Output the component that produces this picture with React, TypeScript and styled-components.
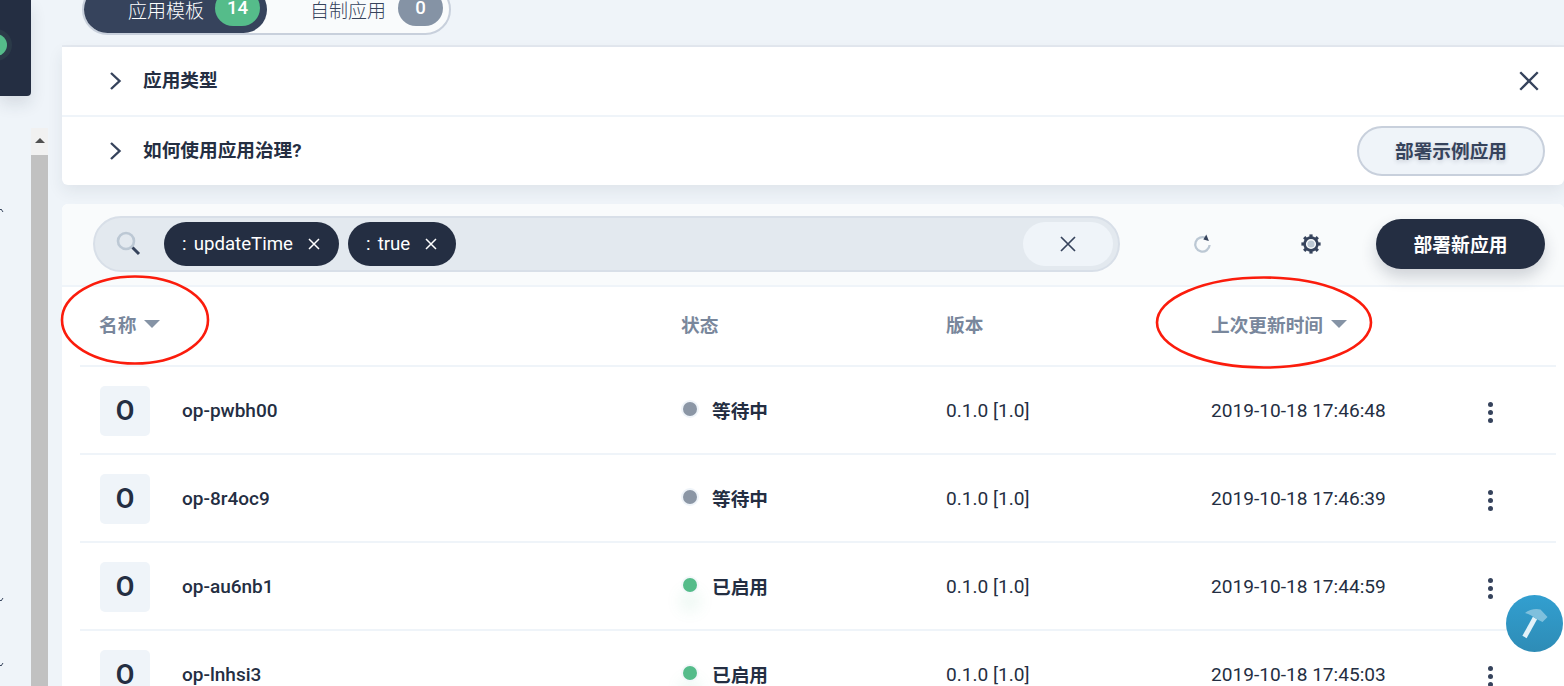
import React from "react";
import styled, { createGlobalStyle } from "styled-components";

const Global = createGlobalStyle`
  html, body { margin: 0; padding: 0; height: 100%; overflow: hidden; background: #eff4f9; }
  body { font-family: Roboto, "Noto Sans CJK SC", sans-serif; color: #242e42; }
  * { box-sizing: border-box; }
`;

const Page = styled.div`
  display: flex;
  width: 1564px;
  height: 686px;
  overflow: hidden;
  background: #eff4f9;
`;

const Side = styled.aside`
  flex: 0 0 62px;
  display: flex;
  flex-direction: column;
`;

const SideCard = styled.div`
  position: relative;
  flex: 0 0 96px;
  width: 31px;
  background: #242e42;
  border-radius: 0 0 4px 0;
  box-shadow: 0 8px 16px rgba(36, 46, 66, 0.12);
  overflow: hidden;
`;

const SideBadge = styled.span`
  position: absolute;
  left: -15px;
  top: 34px;
  width: 22px;
  height: 22px;
  border-radius: 50%;
  background: #55bc8a;
  box-shadow: 0 0 0 5px #2b3a48;
`;

const SideBody = styled.div`
  flex: 1;
  display: flex;
  padding-top: 32px;
`;

const SideStrip = styled.div`
  flex: 0 0 31px;
  display: flex;
  flex-direction: column;
  padding-top: 80px;
`;

const StripMark = styled.svg<{ $gap: number }>`
  display: block;
  width: 4px;
  height: 5px;
  margin-top: ${(p) => p.$gap}px;
`;

const Scrollbar = styled.div`
  flex: 0 0 17px;
  display: flex;
  flex-direction: column;
`;

const ScrollArrow = styled.div`
  flex: 0 0 27px;
  display: flex;
  align-items: center;
  justify-content: center;
  background: #f1f1f1;
  &::before {
    content: "";
    border-left: 5px solid transparent;
    border-right: 5px solid transparent;
    border-bottom: 5px solid #505050;
    margin-bottom: 3px;
  }
`;

const ScrollThumb = styled.div`
  flex: 1;
  background: #c1c1c1;
`;

const Main = styled.main`
  flex: 1;
  min-width: 0;
  display: flex;
  flex-direction: column;
`;

const TabBar = styled.div`
  flex: 0 0 47px;
  padding-left: 20px;
  border-bottom: 2px solid #e4e9f0;
`;

const TabGroup = styled.div`
  display: inline-flex;
  align-items: center;
  width: 369px;
  height: 51px;
  margin-top: -16px;
  border: 2px solid #c8d0dc;
  border-radius: 26px;
  background: #f9fbfc;
`;

const Tab = styled.div<{ $active?: boolean }>`
  display: flex;
  align-items: center;
  height: 47px;
  width: ${(p) => (p.$active ? "183px" : "auto")};
  padding: ${(p) => (p.$active ? "0 7px 0 44px" : "0 0 0 43px")};
  border-radius: 24px;
  background: ${(p) => (p.$active ? "#36435c" : "transparent")};
  color: ${(p) => (p.$active ? "#ffffff" : "#36435c")};
  font-size: 19px;
  font-weight: 300;
`;

const TabLabel = styled.span`
  padding-bottom: 1px;
`;

const TabCount = styled.span<{ $tone: "green" | "grey" }>`
  display: flex;
  align-items: center;
  justify-content: center;
  width: 45px;
  height: 36px;
  margin: -3px 0 0 ${(p) => (p.$tone === "green" ? "11px" : "12px")};
  border-radius: 18px;
  background: ${(p) => (p.$tone === "green" ? "#55bc8a" : "#8593a5")};
  color: #ffffff;
  font-size: 18.67px;
  font-weight: 500;
`;

const InfoPanel = styled.section`
  flex: 0 0 138px;
  background: #ffffff;
  border-radius: 0 0 6px 6px;
  box-shadow: 0 6px 16px rgba(36, 46, 66, 0.08);
`;

const InfoRow = styled.div<{ $divider?: boolean }>`
  display: flex;
  align-items: center;
  height: ${(p) => (p.$divider ? "70px" : "68px")};
  padding: 0 ${(p) => (p.$divider ? "25px" : "19px")} 0 47px;
  border-bottom: ${(p) => (p.$divider ? "2px solid #eff4f9" : "none")};
`;

const InfoTitle = styled.span`
  flex: 1;
  margin-left: 21px;
  padding-bottom: 5px;
  font-size: 18.67px;
  font-weight: 700;
  color: #242e42;
`;

const Ghost = styled.div`
  display: flex;
  align-items: center;
  justify-content: center;
  width: 188px;
  height: 50px;
  padding-bottom: 4px;
  border: 2px solid #c8d0dc;
  border-radius: 25px;
  background: #eff4f9;
  color: #36435c;
  font-size: 18.67px;
  font-weight: 700;
  text-shadow: 0 2px 4px rgba(54, 67, 92, 0.2);
`;

const ListPanel = styled.section`
  position: relative;
  flex: 1;
  margin-top: 19px;
  background: #ffffff;
  border-radius: 6px 6px 0 0;
`;

const Toolbar = styled.div`
  display: flex;
  align-items: center;
  height: 83px;
  padding: 0 19px 2px 31px;
  background: #f9fbfc;
  border-radius: 6px 6px 0 0;
  border-bottom: 2px solid #eff4f9;
`;

const SearchBox = styled.div`
  display: flex;
  align-items: center;
  flex: 0 0 1027px;
  height: 56px;
  padding: 0 5px 0 21px;
  border: 2px solid #d8dfe8;
  border-radius: 28px;
  background: #e3e9ef;
`;

const SearchGlyph = styled.svg`
  flex: none;
  width: 26px;
  height: 26px;
  margin-right: 22px;
`;

const Tag = styled.span`
  display: flex;
  align-items: center;
  height: 44px;
  margin-right: 9px;
  padding: 0 19px 0 18px;
  border-radius: 22px;
  background: #242e42;
  color: #ffffff;
  font-size: 18.67px;
  word-spacing: 2.5px;
  white-space: pre;
`;

const TagClose = styled.svg`
  width: 12px;
  height: 12px;
  margin-left: 15px;
`;

const Spacer = styled.span`
  flex: 1;
`;

const ClearButton = styled.div`
  display: flex;
  align-items: center;
  justify-content: center;
  flex: 0 0 90px;
  height: 44px;
  border-radius: 22px;
  background: #eff4f9;
`;

const ToolIcon = styled.svg<{ $left: number }>`
  flex: none;
  width: 20px;
  height: 20px;
  margin-left: ${(p) => p.$left}px;
`;

const Primary = styled.div`
  display: flex;
  align-items: center;
  justify-content: center;
  flex: 0 0 169px;
  height: 50px;
  margin-left: 55px;
  padding-bottom: 1px;
  border-radius: 25px;
  background: #242e42;
  color: #ffffff;
  font-size: 18.8px;
  font-weight: 700;
  box-shadow: 0 8px 16px rgba(36, 46, 66, 0.2);
`;

const Table = styled.div`
  margin: 0 8px 0 18px;
`;

const Grid = styled.div<{ $head?: boolean }>`
  display: grid;
  grid-template-columns: 582px 265px 265px 279px 85px;
  align-items: center;
  height: ${(p) => (p.$head ? "80px" : "88px")};
  padding-top: ${(p) => (p.$head ? "0" : "2px")};
  border-bottom: 2px solid #eff4f9;
`;

const HeadCell = styled.div`
  display: flex;
  align-items: center;
  padding: 0 0 5px 19px;
  color: #79879c;
  font-size: 18.67px;
  font-weight: 700;
`;

const Caret = styled.span`
  width: 0;
  height: 0;
  margin: 0 0 0 8px;
  border-left: 8px solid transparent;
  border-right: 8px solid transparent;
  border-top: 8px solid #8593a5;
`;

const NameCell = styled.div`
  display: flex;
  align-items: center;
  padding-left: 20px;
`;

const Avatar = styled.div`
  display: flex;
  align-items: center;
  justify-content: center;
  width: 50px;
  height: 50px;
  border-radius: 5px;
  background: #eff4f9;
  font-size: 27px;
  font-weight: 600;
  color: #242e42;
`;

const AppName = styled.span`
  margin-left: 32px;
  padding-bottom: 2px;
  font-size: 19px;
  font-weight: 500;
  color: #242e42;
`;

const StatusCell = styled.div`
  display: flex;
  align-items: center;
  padding-left: 19px;
`;

const Dot = styled.span<{ $on?: boolean }>`
  flex: none;
  width: 14px;
  height: 14px;
  margin: -4px 0 0 2px;
  border-radius: 50%;
  background: ${(p) => (p.$on ? "#55bc8a" : "#8b96a5")};
  box-shadow: ${(p) =>
    p.$on
      ? "0 0 0 2px #f4f8fa, 0 16px 16px 2px rgba(85, 188, 138, 0.15)"
      : "0 0 0 2px #eff4f9"};
`;

const StatusText = styled.span`
  margin-left: 15px;
  padding-bottom: 3px;
  font-size: 18.67px;
  font-weight: 700;
  color: #242e42;
`;

const Plain = styled.div`
  padding: 0 0 2px 19px;
  font-size: 19.1px;
  color: #242e42;
`;

const More = styled.div`
  display: flex;
  flex-direction: column;
  gap: 3px;
  width: 5px;
  margin: 3px 0 0 17px;
  & > i {
    display: block;
    width: 5px;
    height: 5px;
    border-radius: 50%;
    background: #36435c;
  }
`;

const Ring = styled.svg<{ $x: number; $y: number; $w: number; $h: number }>`
  position: absolute;
  left: ${(p) => p.$x}px;
  top: ${(p) => p.$y}px;
  width: ${(p) => p.$w}px;
  height: ${(p) => p.$h}px;
  pointer-events: none;
`;

const Fab = styled.svg`
  position: absolute;
  left: 1506px;
  top: 595px;
  width: 57px;
  height: 57px;
`;

const X = ({ size, color, w = 1.6 }: { size: number; color: string; w?: number }) => (
  <svg width={size} height={size} viewBox="0 0 16 16" fill="none" stroke={color} strokeWidth={w}>
    <path d="M1 1l14 14M15 1L1 15" />
  </svg>
);

const Chevron = () => (
  <svg width="13" height="20" viewBox="0 0 13 20" fill="none" stroke="#36435c" strokeWidth="2.4">
    <path d="M2 2l8.5 8L2 18" />
  </svg>
);

const rows = [
  { name: "op-pwbh00", on: false, status: "等待中", time: "2019-10-18 17:46:48" },
  { name: "op-8r4oc9", on: false, status: "等待中", time: "2019-10-18 17:46:39" },
  { name: "op-au6nb1", on: true, status: "已启用", time: "2019-10-18 17:44:59" },
  { name: "op-lnhsi3", on: true, status: "已启用", time: "2019-10-18 17:45:03" },
];

const tagX = (
  <TagClose viewBox="0 0 12 12" fill="none" stroke="#fff" strokeWidth="1.5">
    <path d="M1 1l10 10M11 1L1 11" />
  </TagClose>
);

const gearTeeth = [0, 45, 90, 135, 180, 225, 270, 315];

export default function App() {
  return (
    <Page>
      <Global />
      <Side>
        <SideCard>
          <SideBadge />
        </SideCard>
        <SideBody>
          <SideStrip>
            <StripMark $gap={0} viewBox="0 0 4 5" fill="none" stroke="#36435c" strokeWidth="1">
              <path d="M-2 4l3-3 2 3" />
            </StripMark>
            <StripMark $gap={384} viewBox="0 0 4 5" fill="none" stroke="#36435c" strokeWidth="1">
              <path d="M-2 1l3 3 2-3" />
            </StripMark>
            <StripMark $gap={60} viewBox="0 0 4 5" fill="none" stroke="#36435c" strokeWidth="1">
              <path d="M-2 1l3 3 2-3" />
            </StripMark>
          </SideStrip>
          <Scrollbar>
            <ScrollArrow />
            <ScrollThumb />
          </Scrollbar>
        </SideBody>
      </Side>

      <Main>
        <TabBar>
          <TabGroup>
            <Tab $active>
              <TabLabel>应用模板</TabLabel>
              <TabCount $tone="green">14</TabCount>
            </Tab>
            <Tab>
              <TabLabel>自制应用</TabLabel>
              <TabCount $tone="grey">0</TabCount>
            </Tab>
          </TabGroup>
        </TabBar>

        <InfoPanel>
          <InfoRow $divider>
            <Chevron />
            <InfoTitle>应用类型</InfoTitle>
            <X size={20} color="#36435c" w={1.9} />
          </InfoRow>
          <InfoRow>
            <Chevron />
            <InfoTitle>如何使用应用治理?</InfoTitle>
            <Ghost>部署示例应用</Ghost>
          </InfoRow>
        </InfoPanel>

        <ListPanel>
          <Toolbar>
            <SearchBox>
              <SearchGlyph viewBox="0 0 26 26" fill="none">
                <circle cx="10" cy="10" r="8" stroke="#bcc8d4" strokeWidth="2.6" />
                <path d="M16.5 16.5l6.5 6.5" stroke="#36435c" strokeWidth="3" />
              </SearchGlyph>
              <Tag>: updateTime{tagX}</Tag>
              <Tag>: true{tagX}</Tag>
              <Spacer />
              <ClearButton>
                <X size={16} color="#36435c" w={1.7} />
              </ClearButton>
            </SearchBox>
            <ToolIcon $left={73} viewBox="0 0 20 20" fill="none">
              <path d="M13 4.2A7.2 7.2 0 1 0 16.6 11" stroke="#bcc8d4" strokeWidth="2.3" />
              <path d="M13.3 0.5l2.6 6.5-5.5-1.4z" fill="#36435c" />
            </ToolIcon>
            <ToolIcon $left={88} viewBox="0 0 20 20" fill="none">
              {gearTeeth.map((a) => (
                <rect key={a} x="8.4" y="0.4" width="3.2" height="3.6" fill="#36435c" transform={`rotate(${a} 10 10)`} />
              ))}
              <circle cx="10" cy="10" r="6.4" stroke="#36435c" strokeWidth="2.6" />
              <circle cx="10" cy="10" r="3.6" fill="#bcc8d4" />
            </ToolIcon>
            <Primary>部署新应用</Primary>
          </Toolbar>

          <Table>
            <Grid $head>
              <HeadCell>
                名称
                <Caret />
              </HeadCell>
              <HeadCell>状态</HeadCell>
              <HeadCell>版本</HeadCell>
              <HeadCell>
                上次更新时间
                <Caret />
              </HeadCell>
              <div />
            </Grid>
            {rows.map((r) => (
              <Grid key={r.name}>
                <NameCell>
                  <Avatar>O</Avatar>
                  <AppName>{r.name}</AppName>
                </NameCell>
                <StatusCell>
                  <Dot $on={r.on} />
                  <StatusText>{r.status}</StatusText>
                </StatusCell>
                <Plain>0.1.0 [1.0]</Plain>
                <Plain>{r.time}</Plain>
                <More>
                  <i />
                  <i />
                  <i />
                </More>
              </Grid>
            ))}
          </Table>

          <Ring $x={-2} $y={71} $w={150} $h={92} viewBox="0 0 150 92" fill="none">
            <ellipse cx="75" cy="45" rx="73" ry="43.5" stroke="#fb1c0c" strokeWidth="2.6" />
          </Ring>
          <Ring $x={1093} $y={72} $w={218} $h={94} viewBox="0 0 218 94" fill="none">
            <ellipse cx="109" cy="46.5" rx="107" ry="45" stroke="#fb1c0c" strokeWidth="2.6" />
          </Ring>
        </ListPanel>
      </Main>

      <Fab viewBox="0 0 57 57">
        <defs>
          <linearGradient id="fabFill" x1="0" y1="0" x2="0" y2="1">
            <stop offset="0" stopColor="#329fd0" />
            <stop offset="1" stopColor="#2e8cb6" />
          </linearGradient>
        </defs>
        <circle cx="28.5" cy="28.5" r="28.5" fill="url(#fabFill)" />
        <path d="M29 23L18.5 42" stroke="#e2f2f9" strokeWidth="4.8" fill="none" />
        <path d="M19 18c4-3.500 11-5 15.500-3.500L41.500 22l-5 5-7-3.500c-3-2.500-6-4.500-10.500-5.500z" fill="#7fc0dd" />
      </Fab>
    </Page>
  );
}
